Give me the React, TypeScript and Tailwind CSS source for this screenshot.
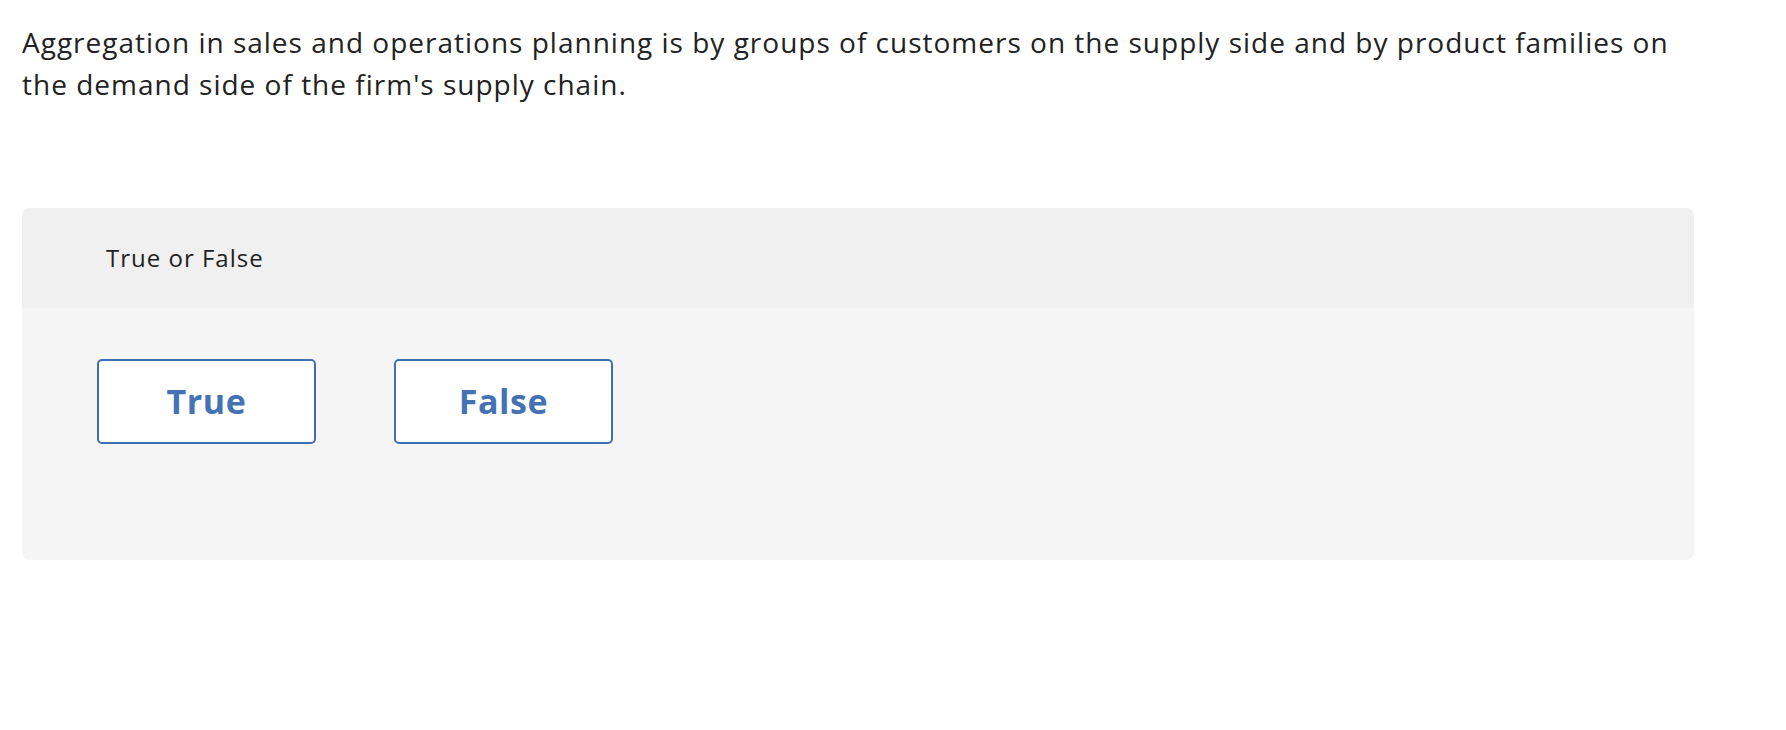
export default function App() {
  return (
    <div className="min-h-screen bg-white pl-[22px] pt-[21px] font-['Open_Sans','Liberation_Sans',sans-serif] text-[#222]">
      <p className="text-[28px] leading-[42px] tracking-[1px] whitespace-nowrap">
        Aggregation in sales and operations planning is by groups of customers on the supply side and by product families on
        <br />
        the demand side of the firm's supply chain.
      </p>

      <div className="mt-[103px] w-[1672px] rounded-lg overflow-hidden">
        {/* Header */}
        <div className="h-[100px] bg-[#f0f0f0] pl-[84px] flex items-center">
          <span className="text-[24px] tracking-[1px] text-[#222]">True or False</span>
        </div>

        {/* Choices */}
        <div className="bg-[#f5f5f5] pl-[75px] pt-[51px] pb-[116px] flex gap-[78px]">
          <button className="w-[219px] h-[85px] bg-white border-2 border-[#3f6fb3] rounded-[5px] text-[34px] tracking-[0.6px] font-bold text-[#4472b4]">
            True
          </button>
          <button className="w-[219px] h-[85px] bg-white border-2 border-[#3f6fb3] rounded-[5px] text-[34px] tracking-[0.6px] font-bold text-[#4472b4]">
            False
          </button>
        </div>
      </div>
    </div>
  );
}
